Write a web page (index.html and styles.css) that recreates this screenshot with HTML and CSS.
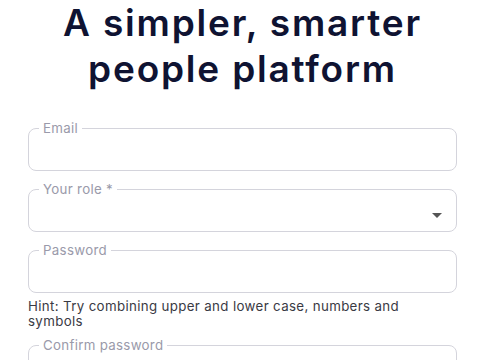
FILE: index.html
```html
<!DOCTYPE html>
<html lang="en">
<head>
<meta charset="utf-8">
<link rel="stylesheet" href="styles.css">
</head>
<body>
<main class="page">
  <h1 class="title">A simpler, smarter<br>people platform</h1>
  <form class="form">
    <fieldset class="field">
      <legend class="label">Email</legend>
      <div class="control"></div>
    </fieldset>
    <fieldset class="field">
      <legend class="label">Your role *</legend>
      <div class="control select">
        <svg class="arrow" width="10" height="5" viewBox="0 0 10 5"><path d="M0 0h10L5 5z" fill="#555"/></svg>
      </div>
    </fieldset>
    <fieldset class="field">
      <legend class="label">Password</legend>
      <div class="control"></div>
    </fieldset>
    <p class="hint">Hint: Try combining upper and lower case, numbers and symbols</p>
    <fieldset class="field">
      <legend class="label">Confirm password</legend>
      <div class="control"></div>
    </fieldset>
  </form>
</main>
</body>
</html>
```
FILE: styles.css
```css
html, body {
  margin: 0;
  padding: 0;
  background: #ffffff;
  overflow: hidden;
}
.page {
  padding: 0 23px 0 28px;
  font-family: Inter, "Noto Sans", sans-serif;
}
.title {
  margin: 0;
  text-align: center;
  font-size: 37px;
  line-height: 46px;
  font-weight: 600;
  color: #0f1332;
  letter-spacing: 1.8px;
}
.form {
  margin-top: 28px;
  display: flex;
  flex-direction: column;
}
.field {
  margin: 0 0 10px 0;
  padding: 0 13px;
  border: 1px solid #d4d4dc;
  border-radius: 8px;
  min-width: 0;
}
.label {
  padding: 0 4px;
  margin-left: -3px;
  font-size: 13.3px;
  line-height: 16px;
  letter-spacing: 0.3px;
  color: #9a9aaa;
}
.control {
  height: 34px;
  display: flex;
  align-items: center;
  justify-content: flex-end;
}
.arrow {
  margin-right: 1px;
  margin-top: 2px;
}
.hint {
  margin: -4px 0 8px 0;
  font-size: 13.3px;
  line-height: 15px;
  letter-spacing: 0.35px;
  color: #3a3a44;
}
```
